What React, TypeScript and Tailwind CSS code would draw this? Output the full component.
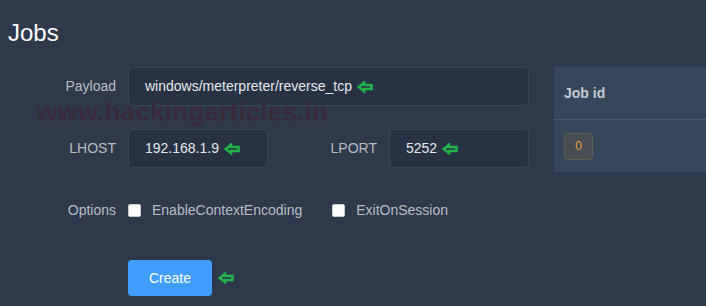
import React from "react";

const font = { fontFamily: "'Liberation Sans', Arial, sans-serif" };

function Arrow() {
  return (
    <svg width="16" height="12" viewBox="0 0 16 12" className="shrink-0">
      <polygon
        points="1.8,6 7,1.8 7,4 14.5,4 14.5,8 7,8 7,10.2"
        fill="none"
        stroke="#22b24c"
        strokeWidth="2.6"
        strokeLinejoin="miter"
      />
    </svg>
  );
}

function Field({ value, width }: { value: string; width: string }) {
  return (
    <div
      className={`${width} h-[39px] flex items-center gap-[5px] px-4 rounded bg-[#273344] border border-[#3a4658] text-[14px] text-[#e4e8ed]`}
    >
      <span>{value}</span>
      <Arrow />
    </div>
  );
}

function Check({ label }: { label: string }) {
  return (
    <label className="flex items-center gap-[11px]">
      <span className="w-[13px] h-[13px] rounded-[2px] bg-white border border-[#c9cdd4]" />
      <span className="text-[14px] text-[#b6bdc6]">{label}</span>
    </label>
  );
}

export default function App() {
  return (
    <div className="relative w-[706px] h-[306px] overflow-hidden bg-[#2e3a4b]" style={font}>
      <h1 className="px-2 pt-[17px] text-[24px] leading-8 text-white">Jobs</h1>

      <div className="flex mt-[18px]">
        {/* form */}
        <div className="w-[529px] shrink-0">
          <div className="flex items-center">
            <div className="w-[116px] mr-3 text-right text-[14px] text-[#b6bdc6]">Payload</div>
            <Field value="windows/meterpreter/reverse_tcp" width="w-[401px]" />
          </div>

          <div className="flex items-center mt-[23px]">
            <div className="w-[116px] mr-3 text-right text-[14px] text-[#b6bdc6]">LHOST</div>
            <Field value="192.168.1.9" width="w-[140px]" />
            <div className="w-[109px] mr-3 text-right text-[14px] text-[#b6bdc6]">LPORT</div>
            <Field value="5252" width="w-[140px]" />
          </div>

          <div className="flex items-center mt-[23px] h-[39px]">
            <div className="w-[116px] mr-3 text-right text-[14px] text-[#b6bdc6]">Options</div>
            <Check label="EnableContextEncoding" />
            <div className="ml-[30px]">
              <Check label="ExitOnSession" />
            </div>
          </div>

          <div className="flex items-center mt-[30px] pl-[128px] gap-[6px]">
            <button className="w-[84px] h-[36px] rounded bg-[#409eff] text-white text-[14px]">
              Create
            </button>
            <Arrow />
          </div>
        </div>

        {/* jobs table */}
        <div className="ml-[25px] flex-1 h-[105px] bg-[#37475b]">
          <div className="h-[53px] flex items-center px-[10px] border-b border-[#4d5a6b] text-[14px] font-bold text-[#c3cad3]">
            Job id
          </div>
          <div className="h-[52px] flex items-center px-[10px]">
            <span className="w-[29px] h-[27px] flex items-center justify-center rounded bg-[#474d52] border border-[#5d5f56] text-[12px] text-[#e6a23c]">
              0
            </span>
          </div>
        </div>
      </div>

      {/* watermark */}
      <div className="absolute left-[37px] top-[97px] text-[26px] leading-[30px] font-bold tracking-[0.2px] text-[#3a2b3c] pointer-events-none whitespace-nowrap">
        www.hackingarticles.in
      </div>
    </div>
  );
}
